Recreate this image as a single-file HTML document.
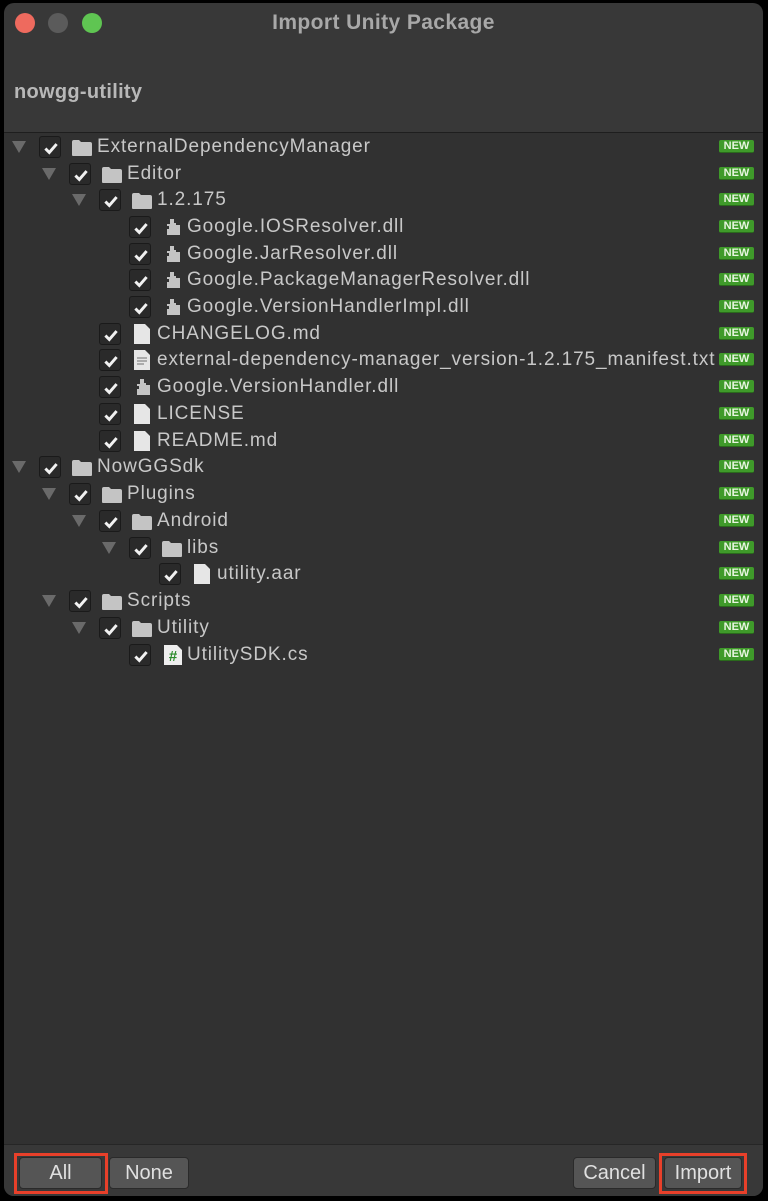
<!DOCTYPE html>
<html><head><meta charset="utf-8"><style>
*{margin:0;padding:0;box-sizing:border-box}
body{width:768px;height:1201px;background:#000;position:relative;overflow:hidden;font-family:"Liberation Sans",sans-serif}
.win{position:absolute;left:4px;top:3px;width:759px;height:1193px;background:#383838;border-radius:10px;overflow:hidden}
.title{position:absolute;left:0;top:0;width:100%;height:40px;text-align:center;line-height:40px;color:#a8a8a8;font-weight:bold;font-size:21px;letter-spacing:0.4px}
.dot{position:absolute;top:10px;width:20px;height:20px;border-radius:50%}
.pkg{position:absolute;left:10px;top:78px;color:#b8b8b8;font-weight:bold;font-size:20px;letter-spacing:0.3px}
.tree{position:absolute;left:0;top:129px;width:100%;height:1012px;background:#313131;border-top:1px solid #1e1e1e}
.bottom{position:absolute;left:0;top:1141px;width:100%;height:52px;background:#383838;border-top:1px solid #262626}
.row{position:absolute;height:26px;width:760px}
.tri{position:absolute;left:8px;top:7px;width:0;height:0;border-left:7px solid transparent;border-right:7px solid transparent;border-top:12px solid #6a6a6a}
.cb{position:absolute;left:35px;top:2px;width:22px;height:22px;background:#2a2a2a;border:1px solid #1a1a1a;border-radius:3px}
.cb svg{position:absolute;left:2px;top:2px}
.txt{position:absolute;left:93px;top:2px;color:#c8c8c8;font-size:19px;letter-spacing:0.9px;white-space:nowrap;line-height:22px}
.ic{position:absolute;left:68px;top:4px}
.new{position:absolute;left:719px;width:35px;height:13px;background:#3f9a2a;border-radius:2px;color:#e8f5e0;font-size:11px;font-weight:bold;text-align:center;line-height:13px;border-bottom:1px solid #2a6a1c}
.btn{position:absolute;top:1157px;height:32px;background:#555;border:1px solid #2a2a2a;border-radius:4px;color:#e0e0e0;font-size:20px;text-align:center;line-height:30px}
.red{position:absolute;border:3px solid #e8402a}
</style></head><body>
<div class="win">
<div class="dot" style="left:11px;background:#ee6a5e"></div>
<div class="dot" style="left:44px;background:#5b5b5b"></div>
<div class="dot" style="left:78px;background:#5fc552"></div>
<div class="title">Import Unity Package</div>
<div class="pkg">nowgg-utility</div>
<div class="tree"></div>
<div class="bottom"></div>
</div>

<svg width="0" height="0" style="position:absolute">
<defs>
<symbol id="chk" viewBox="0 0 16 16"><path d="M3 8.5 L6.5 12 L13 4.5" fill="none" stroke="#f2f2f2" stroke-width="2.6"/></symbol>
<symbol id="fold" viewBox="0 0 20 16"><path d="M0 2 Q0 0 2 0 H7 L9 2 H18 Q20 2 20 4 V15 Q20 16 19 16 H1 Q0 16 0 15 Z" fill="#c4c4c4"/></symbol>
<symbol id="file" viewBox="0 0 16 20"><path d="M0 0 H11 L16 5 V20 H0 Z" fill="#e6e6e6"/></symbol>
<symbol id="txtf" viewBox="0 0 16 20"><path d="M0 0 H11 L16 5 V20 H0 Z" fill="#e6e6e6"/><path d="M3 8H13M3 11H13M3 14H10" stroke="#888" stroke-width="1.3"/></symbol>
<symbol id="dll" viewBox="0 0 14 16"><path d="M4 0 H8 V4 H10 V6 H14 V16 H1 V10 H3 V7 H1 V5 H4 Z" fill="#c4c4c4"/></symbol>
<symbol id="cs" viewBox="0 0 18 20"><path d="M0 0 H13 L18 5 V20 H0 Z" fill="#eee"/><text x="9" y="16" font-family="Liberation Sans" font-weight="bold" font-size="15" fill="#2a8a2a" text-anchor="middle">#</text></symbol>
</defs></svg>

<div class="row" style="top:134px;left:4px"><div class="tri"></div><div class="cb"><svg width="18" height="18"><use href="#chk"/></svg></div><svg class="ic" width="20" height="16" style="top:6px"><use href="#fold"/></svg><div class="txt">ExternalDependencyManager</div></div>
<div class="row" style="top:161px;left:34px"><div class="tri"></div><div class="cb"><svg width="18" height="18"><use href="#chk"/></svg></div><svg class="ic" width="20" height="16" style="top:6px"><use href="#fold"/></svg><div class="txt">Editor</div></div>
<div class="row" style="top:187px;left:64px"><div class="tri"></div><div class="cb"><svg width="18" height="18"><use href="#chk"/></svg></div><svg class="ic" width="20" height="16" style="top:6px"><use href="#fold"/></svg><div class="txt">1.2.175</div></div>
<div class="row" style="top:214px;left:94px"><div class="cb"><svg width="18" height="18"><use href="#chk"/></svg></div><svg class="ic" width="14" height="16" style="left:72px;top:5px"><use href="#dll"/></svg><div class="txt">Google.IOSResolver.dll</div></div>
<div class="row" style="top:241px;left:94px"><div class="cb"><svg width="18" height="18"><use href="#chk"/></svg></div><svg class="ic" width="14" height="16" style="left:72px;top:5px"><use href="#dll"/></svg><div class="txt">Google.JarResolver.dll</div></div>
<div class="row" style="top:267px;left:94px"><div class="cb"><svg width="18" height="18"><use href="#chk"/></svg></div><svg class="ic" width="14" height="16" style="left:72px;top:5px"><use href="#dll"/></svg><div class="txt">Google.PackageManagerResolver.dll</div></div>
<div class="row" style="top:294px;left:94px"><div class="cb"><svg width="18" height="18"><use href="#chk"/></svg></div><svg class="ic" width="14" height="16" style="left:72px;top:5px"><use href="#dll"/></svg><div class="txt">Google.VersionHandlerImpl.dll</div></div>
<div class="row" style="top:321px;left:64px"><div class="cb"><svg width="18" height="18"><use href="#chk"/></svg></div><svg class="ic" width="16" height="20" style="left:70px;top:3px"><use href="#file"/></svg><div class="txt">CHANGELOG.md</div></div>
<div class="row" style="top:347px;left:64px"><div class="cb"><svg width="18" height="18"><use href="#chk"/></svg></div><svg class="ic" width="16" height="20" style="left:70px;top:3px"><use href="#txtf"/></svg><div class="txt">external-dependency-manager_version-1.2.175_manifest.txt</div></div>
<div class="row" style="top:374px;left:64px"><div class="cb"><svg width="18" height="18"><use href="#chk"/></svg></div><svg class="ic" width="14" height="16" style="left:72px;top:5px"><use href="#dll"/></svg><div class="txt">Google.VersionHandler.dll</div></div>
<div class="row" style="top:401px;left:64px"><div class="cb"><svg width="18" height="18"><use href="#chk"/></svg></div><svg class="ic" width="16" height="20" style="left:70px;top:3px"><use href="#file"/></svg><div class="txt">LICENSE</div></div>
<div class="row" style="top:428px;left:64px"><div class="cb"><svg width="18" height="18"><use href="#chk"/></svg></div><svg class="ic" width="16" height="20" style="left:70px;top:3px"><use href="#file"/></svg><div class="txt">README.md</div></div>
<div class="row" style="top:454px;left:4px"><div class="tri"></div><div class="cb"><svg width="18" height="18"><use href="#chk"/></svg></div><svg class="ic" width="20" height="16" style="top:6px"><use href="#fold"/></svg><div class="txt">NowGGSdk</div></div>
<div class="row" style="top:481px;left:34px"><div class="tri"></div><div class="cb"><svg width="18" height="18"><use href="#chk"/></svg></div><svg class="ic" width="20" height="16" style="top:6px"><use href="#fold"/></svg><div class="txt">Plugins</div></div>
<div class="row" style="top:508px;left:64px"><div class="tri"></div><div class="cb"><svg width="18" height="18"><use href="#chk"/></svg></div><svg class="ic" width="20" height="16" style="top:6px"><use href="#fold"/></svg><div class="txt">Android</div></div>
<div class="row" style="top:535px;left:94px"><div class="tri"></div><div class="cb"><svg width="18" height="18"><use href="#chk"/></svg></div><svg class="ic" width="20" height="16" style="top:6px"><use href="#fold"/></svg><div class="txt">libs</div></div>
<div class="row" style="top:561px;left:124px"><div class="cb"><svg width="18" height="18"><use href="#chk"/></svg></div><svg class="ic" width="16" height="20" style="left:70px;top:3px"><use href="#file"/></svg><div class="txt">utility.aar</div></div>
<div class="row" style="top:588px;left:34px"><div class="tri"></div><div class="cb"><svg width="18" height="18"><use href="#chk"/></svg></div><svg class="ic" width="20" height="16" style="top:6px"><use href="#fold"/></svg><div class="txt">Scripts</div></div>
<div class="row" style="top:615px;left:64px"><div class="tri"></div><div class="cb"><svg width="18" height="18"><use href="#chk"/></svg></div><svg class="ic" width="20" height="16" style="top:6px"><use href="#fold"/></svg><div class="txt">Utility</div></div>
<div class="row" style="top:642px;left:94px"><div class="cb"><svg width="18" height="18"><use href="#chk"/></svg></div><svg class="ic" width="18" height="20" style="left:70px;top:3px"><use href="#cs"/></svg><div class="txt">UtilitySDK.cs</div></div>

<div class="new" style="top:140px">NEW</div>
<div class="new" style="top:167px">NEW</div>
<div class="new" style="top:193px">NEW</div>
<div class="new" style="top:220px">NEW</div>
<div class="new" style="top:247px">NEW</div>
<div class="new" style="top:273px">NEW</div>
<div class="new" style="top:300px">NEW</div>
<div class="new" style="top:327px">NEW</div>
<div class="new" style="top:353px">NEW</div>
<div class="new" style="top:380px">NEW</div>
<div class="new" style="top:407px">NEW</div>
<div class="new" style="top:434px">NEW</div>
<div class="new" style="top:460px">NEW</div>
<div class="new" style="top:487px">NEW</div>
<div class="new" style="top:514px">NEW</div>
<div class="new" style="top:541px">NEW</div>
<div class="new" style="top:567px">NEW</div>
<div class="new" style="top:594px">NEW</div>
<div class="new" style="top:621px">NEW</div>
<div class="new" style="top:648px">NEW</div>

<div class="btn" style="left:19px;width:83px">All</div>
<div class="btn" style="left:109px;width:80px">None</div>
<div class="btn" style="left:573px;width:83px">Cancel</div>
<div class="btn" style="left:664px;width:78px">Import</div>
<div class="red" style="left:14px;top:1153px;width:94px;height:41px"></div>
<div class="red" style="left:659px;top:1153px;width:88px;height:41px"></div>
</body></html>
